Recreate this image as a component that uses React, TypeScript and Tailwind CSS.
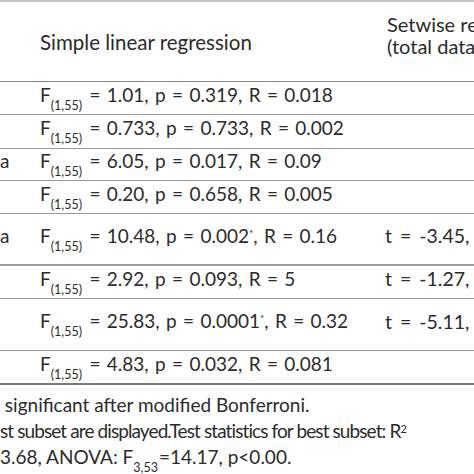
import React from "react";

const font = { fontFamily: "Lato, 'Noto Sans', sans-serif" };

function Sub({ children }: { children: React.ReactNode }) {
  return <span className="relative top-[8px] text-[12.5px] leading-none mr-[1px]">{children}</span>;
}

function Star() {
  return <span className="relative top-[-6px] text-[10px] leading-none">*</span>;
}

type Row = { a?: string; f: React.ReactNode; t?: string; h: string; border: string };

const rows: Row[] = [
  { f: <>= 1.01, p = 0.319, R = 0.018</>, h: "h-[33px]", border: "border-b border-[#9a9a9a]" },
  { f: <>= 0.733, p = 0.733, R = 0.002</>, h: "h-[34px]", border: "border-b border-[#9a9a9a]" },
  { a: "a", f: <>= 6.05, p = 0.017, R = 0.09</>, h: "h-[32px]", border: "border-b border-[#9a9a9a]" },
  { f: <>= 0.20, p = 0.658, R = 0.005</>, h: "h-[33px]", border: "border-b border-[#9a9a9a]" },
  { a: "a", f: <>= 10.48, p = 0.002<Star />, R = 0.16</>, t: "t = -3.45, p", h: "h-[52px]", border: "border-b-2 border-[#9a9a9a]" },
  { f: <>= 2.92, p = 0.093, R = 5</>, t: "t = -1.27, p", h: "h-[33px]", border: "border-b border-[#9a9a9a]" },
  { f: <>= 25.83, p = 0.0001<Star />, R = 0.32</>, t: "t = -5.11, p", h: "h-[52px]", border: "border-b border-[#9a9a9a]" },
  { f: <>= 4.83, p = 0.032, R = 0.081</>, h: "h-[34px]", border: "border-b-2 border-[#7a7a7a]" },
];

export default function App() {
  return (
    <div className="w-[474px] h-[474px] overflow-hidden bg-white text-[#2b2b2b]" style={font}>
      <div className="border-t-2 border-[#c4c4c4]" />
      <div className="flex h-[80px] border-b border-[#8a8a8a] whitespace-nowrap overflow-hidden">
        <div className="w-[40px] shrink-0" />
        <div className="w-[347px] shrink-0 flex items-center text-[20.5px] pt-[2px]">Simple linear regression</div>
        <div className="flex flex-col justify-center text-[20px] leading-[22px] pb-[14px] overflow-hidden">
          <span>Setwise regression</span>
          <span>(total data set)</span>
        </div>
      </div>
      {rows.map((r, i) => (
        <div key={i} className={`flex items-center whitespace-nowrap text-[19px] ${r.h} ${r.border}`}>
          <div className="w-[40px] shrink-0 -mt-[6px]">{r.a ?? ""}</div>
          <div className="w-[345px] shrink-0 -mt-[6px] [word-spacing:1.5px]">
            F<Sub>(1,55)</Sub> {r.f}
          </div>
          <div className="-mt-[6px] [word-spacing:3px] text-[19.5px]">{r.t ?? ""}</div>
        </div>
      ))}
      <div className="text-[19px] leading-[26px] whitespace-nowrap pt-[7px]">
        <div>&nbsp;significant after modified Bonferroni.</div>
        <div className="tracking-[-0.9px]">st subset are displayed.Test statistics for best subset: R<sup className="text-[11px]">2</sup></div>
        <div>
          3.68, ANOVA: F<Sub>3,53</Sub>=14.17, p&lt;0.00.
        </div>
      </div>
    </div>
  );
}
